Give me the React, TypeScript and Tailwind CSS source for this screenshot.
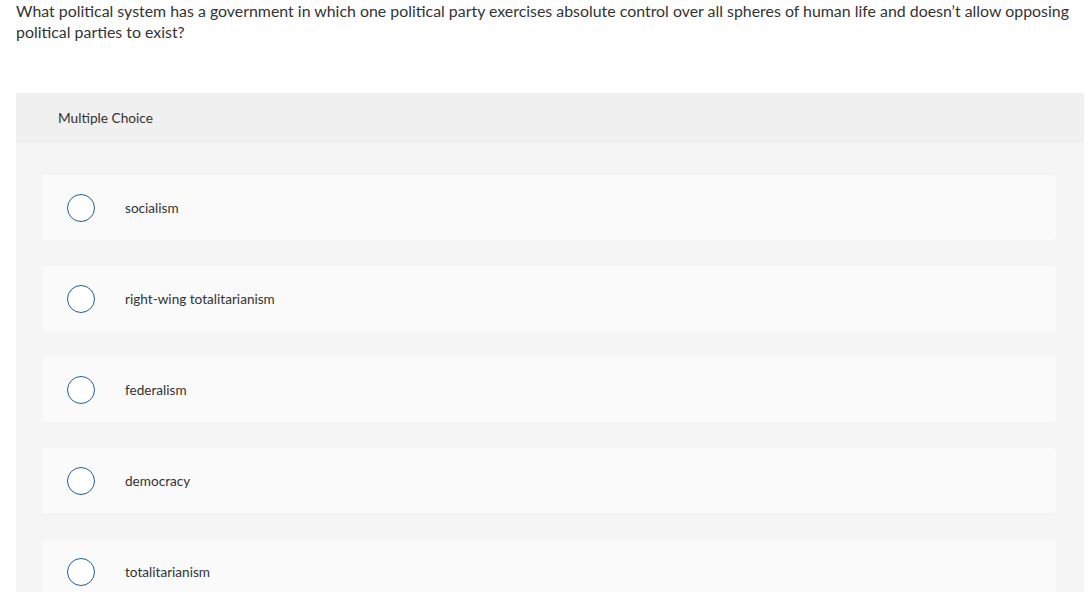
const options = [
  "socialism",
  "right-wing totalitarianism",
  "federalism",
  "democracy",
  "totalitarianism",
]

export default function App() {
  return (
    <div
      className="min-h-screen bg-white text-[#333]"
      style={{ fontFamily: "Lato, 'Open Sans', sans-serif" }}
    >
      <div className="pl-4 pr-2 pt-0 text-[15.9px] leading-[21px]">
        What political system has a government in which one political party exercises absolute control over all spheres of
        human life and doesn’t allow opposing political parties to exist?
      </div>
      <div className="ml-4 mr-[7px] mt-[51px] bg-[#f5f5f5]">
        <div className="flex h-[50px] items-center bg-[#f0f0f0] pl-[42px] text-[13.7px]">
          Multiple Choice
        </div>
        <div className="flex flex-col gap-[26px] pb-8 pl-[26px] pr-[28px] pt-8">
          {options.map((o) => (
            <div
              key={o}
              className="flex h-[65px] items-center rounded-sm bg-[#fafafa]"
            >
              <div className="ml-[25px] h-[28px] w-[28px] rounded-full border-[1.5px] border-[#1f5f97] bg-white" />
              <span className="ml-[30px] pt-px text-[13.6px]">{o}</span>
            </div>
          ))}
        </div>
      </div>
    </div>
  )
}
